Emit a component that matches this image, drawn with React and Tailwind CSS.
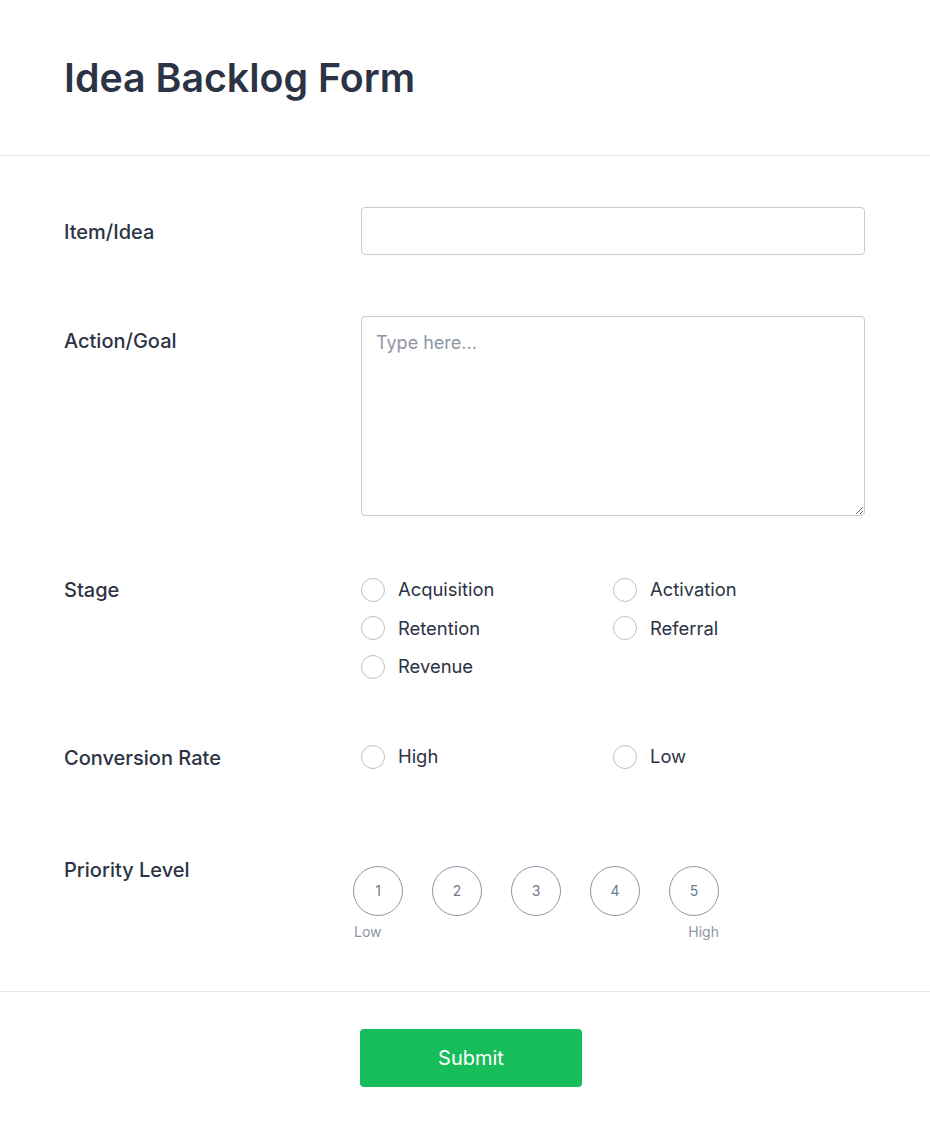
import React, { useState } from 'react';

const stages = ['Acquisition', 'Activation', 'Retention', 'Referral', 'Revenue'];
const rates = ['High', 'Low'];

const Radio = ({ name, label, checked, onChange }) => (
  <label className="flex items-center h-7 cursor-pointer">
    <input type="radio" name={name} checked={checked} onChange={onChange} className="sr-only" />
    <span className={`w-6 h-6 rounded-full border flex items-center justify-center ${checked ? 'border-[#2e69ff]' : 'border-[#b8bfcc]'}`}>
      {checked && <span className="w-3 h-3 rounded-full bg-[#2e69ff]" />}
    </span>
    <span className="ml-[13px] text-[18.4px] text-[#2c3345]">{label}</span>
  </label>
);

const Row = ({ label, className = '', children }) => (
  <div className={`flex items-start ${className}`}>
    <div className="w-[297px] shrink-0 pt-[11px] leading-7 text-[20px] font-medium text-[#2c3345]">{label}</div>
    <div className="w-[504px]">{children}</div>
  </div>
);

export default function App() {
  const [stage, setStage] = useState('');
  const [rate, setRate] = useState('');
  const [priority, setPriority] = useState(0);

  return (
    <div className="w-[930px] min-h-[1138px] bg-white" style={{ fontFamily: 'Inter, "Noto Sans", sans-serif' }}>
      <div className="h-[156px] flex items-center px-16 border-b border-[#e3e5ea]">
        <h1 className="text-[39.3px] font-semibold text-[#2c3345] leading-none">Idea Backlog Form</h1>
      </div>

      <div className="px-16 pb-[49px]">
        <Row label="Item/Idea" className="pt-[51px]">
          <input
            type="text"
            className="w-full h-12 px-[14px] border border-[#c3cad8] rounded text-[18px] text-[#2c3345] outline-none focus:border-[#2e69ff]"
          />
        </Row>

        <Row label="Action/Goal" className="mt-[61px]">
          <textarea
            placeholder="Type here..."
            className="block w-full h-[200px] px-[14px] py-[12px] border border-[#c3cad8] rounded text-[18px] text-[#2c3345] placeholder:text-[#8f96a3] outline-none focus:border-[#2e69ff]"
          />
        </Row>

        <Row label="Stage" className="mt-[49px]">
          <div className="grid grid-cols-2 gap-y-[10.4px] pt-[11px]">
            {stages.map((s) => (
              <Radio key={s} name="stage" label={s} checked={stage === s} onChange={() => setStage(s)} />
            ))}
          </div>
        </Row>

        <Row label="Conversion Rate" className="mt-[52px]">
          <div className="grid grid-cols-2 pt-[10px]">
            {rates.map((r) => (
              <Radio key={r} name="rate" label={r} checked={rate === r} onChange={() => setRate(r)} />
            ))}
          </div>
        </Row>

        <Row label="Priority Level" className="mt-[73px]">
          <div className="pt-[21px] -ml-2 w-[366px]">
            <div className="flex gap-[29px]">
              {[1, 2, 3, 4, 5].map((n) => (
                <button
                  key={n}
                  type="button"
                  onClick={() => setPriority(n)}
                  className={`w-[50px] h-[50px] rounded-full border flex items-center justify-center text-[14px] ${
                    priority === n ? 'border-[#2e69ff] bg-[#2e69ff] text-white' : 'border-[#8c94a6] text-[#6f7a8e]'
                  }`}
                >
                  {n}
                </button>
              ))}
            </div>
            <div className="flex justify-between mt-[6px] text-[14px] leading-5 text-[#8d96a5]">
              <span className="ml-px">Low</span>
              <span>High</span>
            </div>
          </div>
        </Row>
      </div>

      <div className="border-t border-[#e3e5ea] pl-[360px] pt-[37px] pb-[51px]">
        <button
          type="submit"
          className="w-[222px] h-[58px] rounded bg-[#18bd5b] hover:bg-[#16aa52] text-white text-[20px] font-normal"
        >
          Submit
        </button>
      </div>
    </div>
  );
}
